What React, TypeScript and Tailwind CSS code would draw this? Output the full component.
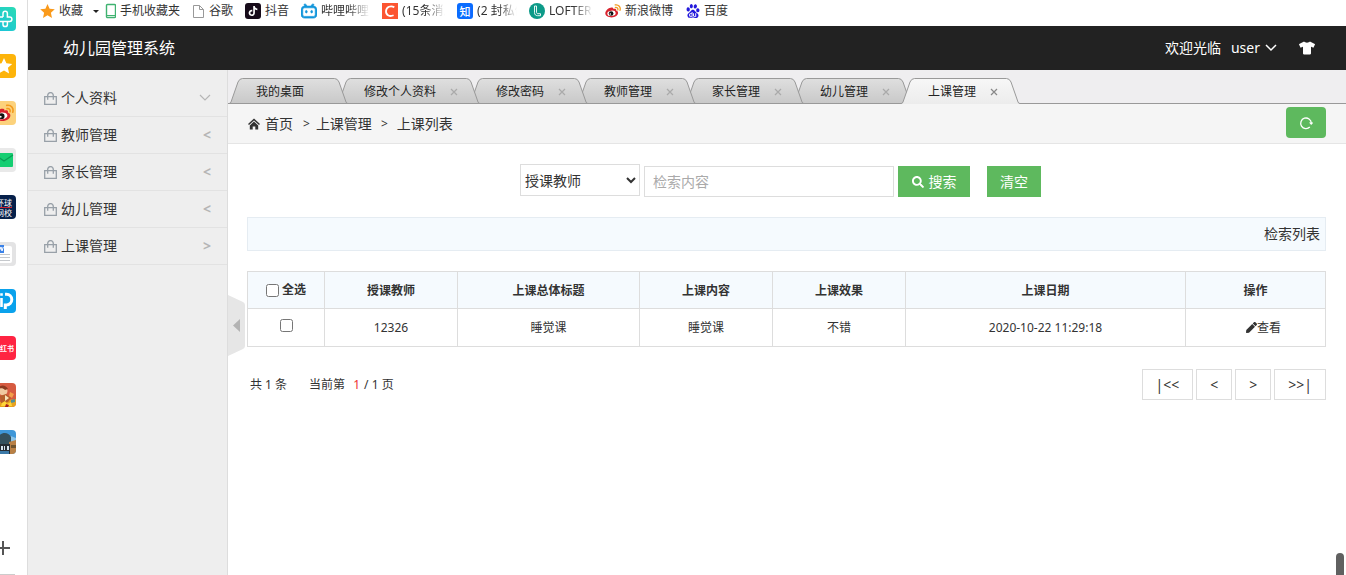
import { useState } from "react";
import type { ReactNode } from "react";
import { FaPen, FaSearch, FaTshirt } from "react-icons/fa";
import { SiBaidu, SiBilibili, SiTiktok } from "react-icons/si";

function WeiboIcon({ className }: { className?: string }) {
  return (
    <svg viewBox="0 0 16 16" className={className} aria-hidden="true">
      <path d="M6.5 4.6C4 4.6.3 7.6.3 10.3c0 2.500 3 4.100 6.200 4.100 4 0 6.600-2.200 6.600-4.400 0-1.400-1-2.100-2-2.400.500-1.500-.6-2.300-2.800-1.500C8.700 5.100 7.800 4.600 6.500 4.600z" fill="#d9232e" />
      <ellipse cx="6.500" cy="10.300" rx="4.200" ry="2.700" fill="#fff" transform="rotate(-8 6.500 10.300)" />
      <circle cx="6.100" cy="10.500" r="2.300" fill="#111" />
      <circle cx="5.300" cy="11" r=".8" fill="#fff" />
      <path d="M10.400 4.500c1.700-.4 2.900.900 2.400 2.500M10.200 1.900c3.500-.6 5.800 2.300 4.800 5.500" fill="none" stroke="#f39a1d" strokeWidth="1.300" strokeLinecap="round" />
    </svg>
  );
}

function BagIcon() {
  return (
    <svg viewBox="0 0 13 13" className="h-[13px] w-[13px]" fill="none" stroke="#98a0a8" aria-hidden="true">
      <path d="M.7 4.700h11.600v7.600H.7zM3.700 7.700V3.400a2.800 2.800 0 0 1 5.600 0v4.300" strokeWidth="1.300" />
    </svg>
  );
}

function HomeIcon() {
  return (
    <svg viewBox="0 0 12 12" className="h-3 w-3" fill="#333" aria-hidden="true">
      <path d="M6 .5 0 6l1 1.100 5-4.600 5 4.600L12 6z" />
      <path d="M6 3.600 1.800 7.400V11.500H4.700V8.400h2.600v3.100h2.900V7.400z" />
    </svg>
  );
}

const tile = "block h-6 w-6 rounded-[4px]";

const dockApps: { name: string; icon: ReactNode }[] = [
  {
    name: "plus",
    icon: (
      <svg viewBox="0 0 24 24" className={tile}>
        <defs>
          <linearGradient id="teal" x1="0" y1="1" x2="1" y2="0">
            <stop offset="0" stopColor="#18bfe0" />
            <stop offset="1" stopColor="#2adbb4" />
          </linearGradient>
        </defs>
        <rect width="24" height="24" fill="url(#teal)" />
        <path d="M11 10V6.500a2.200 2.200 0 0 1 4.400 0V10h2.300a2.200 2.200 0 0 1 0 4.400H11.500M11 10H7.500M15.400 14.400v3a2.200 2.200 0 0 1-4.400 0v-3H8" fill="none" stroke="#fff" strokeWidth="1.500" />
      </svg>
    ),
  },
  {
    name: "star",
    icon: (
      <svg viewBox="0 0 24 24" className={tile}>
        <rect width="24" height="24" fill="#fdb40a" />
        <path d="m12 4 2.400 5.300 5.800.6-4.300 3.900 1.200 5.700L12 16.600l-5.100 2.900 1.200-5.700-4.300-3.900 5.800-.6z" fill="#fff" />
      </svg>
    ),
  },
  {
    name: "weibo",
    icon: (
      <span className="flex h-6 w-6 items-center justify-center rounded-[4px] bg-[#fcd27c]">
        <WeiboIcon className="h-5 w-5" />
      </span>
    ),
  },
  {
    name: "mail",
    icon: (
      <svg viewBox="0 0 24 24" className={tile}>
        <rect width="24" height="24" fill="#e9e9e9" />
        <rect x="3" y="5" width="18" height="14" rx="1" fill="#15ce72" />
        <path d="m3 7 9 6 9-6" fill="none" stroke="#0a9c55" strokeWidth="1.200" />
      </svg>
    ),
  },
  {
    name: "school",
    icon: (
      <span className="flex h-6 w-6 flex-col items-end justify-center rounded-[4px] bg-[#06204a] pr-1 text-[8px] leading-[9px] text-white">
        <span>环球</span>
        <span className="border-t border-[#c23]">网校</span>
      </span>
    ),
  },
  {
    name: "docs",
    icon: (
      <svg viewBox="0 0 24 24" className={tile}>
        <rect width="24" height="24" fill="#e3e3e4" />
        <rect x="4" y="4" width="16" height="17" rx="2" fill="#fff" />
        <path d="M8 12.500h10M8 15.500h10M8 18.500h10" stroke="#c5c8cc" />
        <rect x="3" y="3" width="9" height="8" fill="#3b82e8" />
        <path d="m6 5 1.300 4L9 5l1 4 1.300-4" fill="none" stroke="#fff" />
      </svg>
    ),
  },
  {
    name: "drive",
    icon: (
      <svg viewBox="0 0 24 24" className={tile}>
        <rect width="24" height="24" fill="#0aa2ec" />
        <path d="M9.500 9v9M8.200 5.500h2.600" fill="none" stroke="#fff" strokeWidth="2.600" />
        <path d="M13 5.300h1.500a5.300 5.300 0 0 1 0 10.600H13.300V20" fill="none" stroke="#fff" strokeWidth="3" />
      </svg>
    ),
  },
  {
    name: "xiaohongshu",
    icon: (
      <span className="flex h-6 w-6 items-center justify-end rounded-[4px] bg-[#ff2442] pr-[2px] text-[7px] leading-none font-bold whitespace-nowrap text-white">
        小红书
      </span>
    ),
  },
  {
    name: "game",
    icon: (
      <svg viewBox="0 0 24 24" className={tile}>
        <rect width="24" height="24" fill="#d65b41" />
        <path d="M8 24v-5l7-2 9-1v8z" fill="#e7a31f" />
        <circle cx="11" cy="8" r="4.500" fill="#f0c9a0" />
        <path d="M6 5c3-4 8-3 10 1l-3 1c-2-2-4-2-7-1z" fill="#8c3a20" />
        <path d="m8 13 6-2 5 4-3 4-7 1z" fill="#b5602c" />
        <path d="m13 12 4 3-4 3z" fill="#f7e3b9" />
        <path d="m18 9 4 2-2 4-3-2z" fill="#f3a04a" />
        <path d="m19 17 4-1v3l-4 1z" fill="#4e8f9c" />
        <path d="m10 20 3-2 2 3 4-2 1 4H9z" fill="#ffd53a" />
        <path d="m14 21 3 1-1 2h-3z" fill="#a81d1d" />
      </svg>
    ),
  },
  {
    name: "scene",
    icon: (
      <svg viewBox="0 0 24 24" className={tile}>
        <rect width="24" height="24" fill="#3f97d8" />
        <path d="M16 5l8 3v5l-8 1z" fill="#8cc4e8" />
        <path d="M6 14V8c2-6 10-7 13-1v7z" fill="#34505c" />
        <path d="M17 12l7-2v14h-7z" fill="#b98045" />
        <path d="M19 15h5v3h-5z" fill="#70542e" />
        <path d="M8 14h10v10H8z" fill="#262d33" />
        <path d="M9 16h2v4H9zM12 16h1v4h-1zM15 16h2v4h-2z" fill="#d7e3ec" />
        <path d="M8 21h9v3H8z" fill="#3b79a8" />
      </svg>
    ),
  },
];

const bookmarks: { label: string; icon: ReactNode; clip?: string; caret?: boolean }[] = [
  {
    label: "收藏",
    caret: true,
    icon: (
      <svg viewBox="0 0 16 16" className="h-4 w-4">
        <path d="m8.500 1 2.100 4.800 5.200.5-3.900 3.500 1.100 5.200-4.500-2.700L4 15l1.100-5.200-3.900-3.500 5.200-.5z" fill="#fa9a1b" />
      </svg>
    ),
  },
  {
    label: "手机收藏夹",
    icon: (
      <svg viewBox="0 0 13 16" className="h-4 w-[13px]" fill="none" stroke="#3fb270">
        <rect x="3.500" y="1.500" width="9" height="13" rx="1" strokeWidth="1.400" />
        <path d="M3.500 12.500h9" />
      </svg>
    ),
  },
  {
    label: "谷歌",
    icon: (
      <svg viewBox="0 0 13 16" className="h-4 w-[13px]" fill="none" stroke="#999">
        <path d="M1.500 2.500h6l4 4v8h-10zM7.500 2.500v4h4" />
      </svg>
    ),
  },
  {
    label: "抖音",
    icon: (
      <span className="flex h-4 w-4 items-center justify-center rounded-[3px] bg-[#170b1a] text-white">
        <SiTiktok size={10} />
      </span>
    ),
  },
  { label: "哔哩哔哩", clip: "w-[49px]", icon: <SiBilibili size={16} color="#1296db" stroke="#1296db" strokeWidth={1} /> },
  {
    label: "(15条消息)",
    clip: "w-[43px]",
    icon: (
      <svg viewBox="0 0 16 16" className="h-4 w-4">
        <rect width="16" height="16" fill="#fc5531" />
        <path d="M12.300 4.300C9 2.300 4.200 3.600 4 8.300c-.1 4.300 4 5.600 7.600 4" fill="none" stroke="#fff" strokeWidth="1.800" />
      </svg>
    ),
  },
  {
    label: "(2 封私信)",
    clip: "w-[40px]",
    icon: (
      <span className="flex h-4 w-4 items-center justify-center rounded-[3px] bg-[#0a6cff] text-[11px] leading-none font-medium text-white">知</span>
    ),
  },
  {
    label: "LOFTER",
    clip: "w-[44px]",
    icon: (
      <svg viewBox="0 0 16 16" className="h-4 w-4">
        <circle cx="8" cy="8" r="8" fill="#0c9a88" />
        <path d="M5.500 3v6.500c0 2 1.200 3.200 3 3.200h3v-2H9c-1 0-1.500-.6-1.500-1.600V3z" fill="none" stroke="#fff" strokeWidth=".9" />
      </svg>
    ),
  },
  { label: "新浪微博", icon: <WeiboIcon className="h-4 w-4" /> },
  {
    label: "百度",
    icon: (
      <span className="flex w-[15px] justify-center">
        <SiBaidu size={14} color="#2319dc" />
      </span>
    ),
  },
];

const menu = [
  { label: "个人资料", arrow: "down" },
  { label: "教师管理", arrow: "<" },
  { label: "家长管理", arrow: "<" },
  { label: "幼儿管理", arrow: "<" },
  { label: "上课管理", arrow: ">" },
];

const tabs = ["我的桌面", "修改个人资料", "修改密码", "教师管理", "家长管理", "幼儿管理", "上课管理"];

function Tab({ label, index, active, onSelect }: { label: string; index: number; active: boolean; onSelect: () => void }) {
  const width = 60 + label.length * 12;
  const w = width + 11;
  const outline = `M0 25.500Q1.500 25.500 2 24L9 4Q10.500.5 13.500.5H${w - 13.5}Q${w - 10.5}.5 ${w - 9} 4L${w - 2} 24Q${w - 1.5} 25.500 ${w} 25.500`;
  return (
    <li className="relative flex h-[26px] items-center pt-px" style={{ width, zIndex: active ? 20 : 10 - index }}>
      <svg className="absolute top-0 left-0" width={w} height={26} aria-hidden="true">
        <defs>
          <linearGradient id={`tab-${index}`} x1="0" y1="0" x2="0" y2="1">
            <stop offset="0" stopColor={active ? "#f7f7f7" : "#dfdfdf"} />
            <stop offset="1" stopColor={active ? "#ececec" : "#c8c8c8"} />
          </linearGradient>
        </defs>
        <path d={`${outline}V26H0z`} fill={`url(#tab-${index})`} />
        <path d={outline} fill="none" stroke="#999" />
        {!active && <path d={`M0 25.500H${w}`} stroke="#999" />}
      </svg>
      <button type="button" onClick={onSelect} className="relative pl-[27px] text-xs whitespace-nowrap text-[#222]">
        {label}
      </button>
      {index > 0 && (
        <button type="button" aria-label="关闭" className={active ? "relative ml-3 p-[2px] text-[#888]" : "relative ml-3 p-[2px] text-[#aaa]"}>
          <svg viewBox="0 0 8 8" className="h-2 w-2" stroke="currentColor" strokeWidth="1.200">
            <path d="m1 1 6 6M7 1 1 7" />
          </svg>
        </button>
      )}
    </li>
  );
}

const columns = ["授课教师", "上课总体标题", "上课内容", "上课效果", "上课日期", "操作"];
const rows = [["12326", "睡觉课", "睡觉课", "不错", "2020-10-22 11:29:18"]];
const headCell = "border border-[#ddd] p-0 pt-[2px] text-center";
const cell = "border border-[#ddd] p-0 text-center";
const pageButton = "h-[31px] border border-[#ddd] bg-white px-[13px] text-sm";

export default function App() {
  const [activeTab, setActiveTab] = useState(6);
  return (
    <div className="relative flex min-h-screen overflow-hidden bg-white font-['Noto_Sans','Noto_Sans_CJK_SC',sans-serif] text-sm text-[#333]">
      <aside className="flex w-7 shrink-0 flex-col overflow-hidden border-r border-[#ddd] pt-[7px]">
        <ul className="-ml-2 flex flex-col gap-[23px]">
          {dockApps.map((app) => (
            <li key={app.name} className="h-6 w-6">
              {app.icon}
            </li>
          ))}
        </ul>
        <button type="button" aria-label="添加" className="mt-auto mb-[19px] -ml-1">
          <svg viewBox="0 0 14 14" className="h-[14px] w-[14px]" stroke="#555" strokeWidth="2">
            <path d="M7 0v14M0 7h14" />
          </svg>
        </button>
        <div className="h-px w-[15px] bg-[#ccc]" />
      </aside>

      <div className="flex min-w-0 flex-1 flex-col">
        <nav className="flex h-[26px] shrink-0 items-start gap-3 pt-[2px] pl-[11px] text-xs leading-[18px]">
          {bookmarks.map((b) => (
            <a key={b.label} href="#" className="flex h-[18px] items-center gap-1 whitespace-nowrap">
              <span className="shrink-0">{b.icon}</span>
              {b.clip ? (
                <span className={`${b.clip} overflow-hidden [mask-image:linear-gradient(to_right,black_55%,transparent)]`}>{b.label}</span>
              ) : (
                <span>{b.label}</span>
              )}
              {b.caret && <span className="-mr-2 ml-[6px] border-x-[3px] border-t-[3px] border-x-transparent border-t-[#222]" />}
            </a>
          ))}
        </nav>

        <header className="flex h-11 shrink-0 items-center justify-between bg-[#222] pr-[31px] pl-[35px] text-white">
          <h1 className="text-base">幼儿园管理系统</h1>
          <div className="flex items-center">
            <span>欢迎光临</span>
            <button type="button" className="ml-[10px] flex items-center gap-[5px]">
              user
              <svg viewBox="0 0 12 8" className="h-2 w-3" fill="none" stroke="#fff" strokeWidth="1.500">
                <path d="m1 1 5 5 5-5" />
              </svg>
            </button>
            <button type="button" aria-label="换肤" className="ml-[22px]">
              <FaTshirt size={16} />
            </button>
          </div>
        </header>

        <div className="flex flex-1">
          <aside className="w-[200px] shrink-0 border-r border-[#ddd] bg-[#eee] pt-[10px]">
            <ul>
              {menu.map((m) => (
                <li key={m.label} className="border-b border-[#e2e2e2]">
                  <a href="#" className="flex h-9 items-center gap-1 pr-4 pl-4">
                    <BagIcon />
                    <span>{m.label}</span>
                    {m.arrow === "down" ? (
                      <svg viewBox="0 0 12 8" className="ml-auto h-2 w-3" fill="none" stroke="#b5b5b5" strokeWidth="1.200">
                        <path d="m1 1 5 5 5-5" />
                      </svg>
                    ) : (
                      <span className="ml-auto font-bold text-[#b5b5b5]">{m.arrow}</span>
                    )}
                  </a>
                </li>
              ))}
            </ul>
          </aside>

          <main className="relative min-w-0 flex-1">
            <button type="button" aria-label="收起菜单" className="absolute top-[225px] left-0">
              <svg viewBox="0 0 17 61" className="block h-[61px] w-[17px]">
                <path d="M0 0 15 7q2 1 2 3v41q0 2-2 3L0 61z" fill="#e6e6e6" />
                <path d="m5 30.500 7-6.500v13z" fill="#b3b3b3" />
              </svg>
            </button>

            <ul className="flex h-[34px] items-end bg-[#efeef0] pl-px shadow-[inset_0_-1px_0_#999]">
              {tabs.map((t, i) => (
                <Tab key={t} label={t} index={i} active={i === activeTab} onSelect={() => setActiveTab(i)} />
              ))}
            </ul>

            <div className="flex h-10 items-center border-b border-[#e5e5e5] bg-[#f5f5f5] pr-5 pl-5">
              <HomeIcon />
              <a href="#" className="ml-[5px]">首页</a>
              <span className="mr-[6px] ml-[10px] text-xs">&gt;</span>
              <a href="#">上课管理</a>
              <span className="mx-[9px] text-xs">&gt;</span>
              <span>上课列表</span>
              <button type="button" aria-label="刷新" className="mt-[3px] ml-auto flex h-[31px] w-10 items-center justify-center self-start rounded-[4px] bg-[#5eb95e]">
                <svg viewBox="0 0 14 14" className="h-[14px] w-[14px]" fill="none" stroke="#fff" strokeWidth="1.300">
                  <path d="M10.800 11A5.300 5.300 0 1 1 12.300 7" />
                  <path d="M10 6.500h4.400l-2.200 2.400z" fill="#fff" stroke="none" />
                </svg>
              </button>
            </div>

            <div className="pt-5 pr-5 pl-[19px]">
              <form className="flex h-[33px] items-end justify-center pr-3" onSubmit={(e) => e.preventDefault()}>
                <select aria-label="检索字段" className="mb-px h-8 w-[120px] border border-[#ddd] bg-white">
                  <option>授课教师</option>
                  <option>上课内容</option>
                </select>
                <input aria-label="检索内容" placeholder="检索内容" className="ml-1 h-[31px] w-[250px] border border-[#ddd] px-2 placeholder:text-[#aaa]" />
                <button type="submit" className="ml-1 flex h-[31px] w-[72px] items-center justify-center gap-[5px] bg-[#5eb95e] text-white">
                  <FaSearch size={12} />
                  搜索
                </button>
                <button type="reset" className="ml-[17px] h-[31px] w-[54px] bg-[#5eb95e] text-white">
                  清空
                </button>
              </form>

              <div className="mt-5 flex h-[34px] items-center justify-end border border-[#e5ecf2] bg-[#f5fafe] pr-[5px]">检索列表</div>

              <table className="mt-5 w-full table-fixed border-collapse text-xs">
                <colgroup>
                  <col className="w-[77px]" />
                  <col className="w-[133px]" />
                  <col className="w-[182px]" />
                  <col className="w-[133px]" />
                  <col className="w-[133px]" />
                  <col className="w-[280px]" />
                  <col className="w-[140px]" />
                </colgroup>
                <thead>
                  <tr className="h-[37px] bg-[#f5fafe]">
                    <th className={cell}>
                      <label className="flex items-center justify-center gap-[3px]">
                        <input type="checkbox" className="h-[13px] w-[13px]" />
                        全选
                      </label>
                    </th>
                    {columns.map((c) => (
                      <th key={c} className={headCell}>{c}</th>
                    ))}
                  </tr>
                </thead>
                <tbody>
                  {rows.map((r) => (
                    <tr key={r[0]} className="h-[38px]">
                      <td className={cell}>
                        <input type="checkbox" aria-label="选择" className="mx-auto mb-1 block h-[13px] w-[13px]" />
                      </td>
                      {r.map((v, i) => (
                        <td key={i} className={cell}>{v}</td>
                      ))}
                      <td className={cell}>
                        <a href="#" className="flex items-center justify-center pl-4">
                          <FaPen size={11} />
                          查看
                        </a>
                      </td>
                    </tr>
                  ))}
                </tbody>
              </table>

              <div className="mt-[22px] flex items-center justify-between pl-[3px]">
                <p className="text-xs">
                  共 1 条<span className="ml-[22px]">当前第</span>
                  <span className="mr-px ml-2 text-[#e33]">1</span> / 1 页
                </p>
                <div className="flex gap-[3px]">
                  <button type="button" className={pageButton}>|&lt;&lt;</button>
                  <button type="button" className={pageButton}>&lt;</button>
                  <button type="button" className={pageButton}>&gt;</button>
                  <button type="button" className={pageButton}>&gt;&gt;|</button>
                </div>
              </div>
            </div>
          </main>
        </div>
      </div>
      <div className="absolute right-[2px] bottom-0 h-[22px] w-2 rounded-t-[4px] bg-[#606060]" />
    </div>
  );
}
